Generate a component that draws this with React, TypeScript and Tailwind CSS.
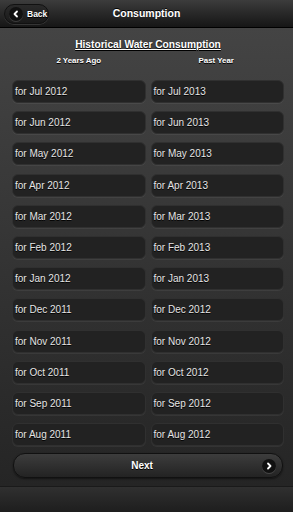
import React from "react";

const left = ["Jul 2012","Jun 2012","May 2012","Apr 2012","Mar 2012","Feb 2012","Jan 2012","Dec 2011","Nov 2011","Oct 2011","Sep 2011","Aug 2011"];
const right = ["Jul 2013","Jun 2013","May 2013","Apr 2013","Mar 2013","Feb 2013","Jan 2013","Dec 2012","Nov 2012","Oct 2012","Sep 2012","Aug 2012"];

function Chevron({ dir }: { dir: "left" | "right" }) {
  return (
    <span className="flex h-[14px] w-[14px] items-center justify-center rounded-full bg-[#111] shadow-[0_1px_0_rgba(255,255,255,0.15)]">
      <svg width="8" height="8" viewBox="0 0 8 8">
        {dir === "left" ? (
          <path d="M5 1.5 L2.5 4 L5 6.5" stroke="#fff" strokeWidth="1.8" fill="none" strokeLinecap="round" strokeLinejoin="round" />
        ) : (
          <path d="M3 1.5 L5.5 4 L3 6.5" stroke="#fff" strokeWidth="1.8" fill="none" strokeLinecap="round" strokeLinejoin="round" />
        )}
      </svg>
    </span>
  );
}

export default function App() {
  const rows = left.map((l, i) => [l, right[i]]);
  return (
    <div className="flex h-[512px] w-[293px] flex-col overflow-hidden font-['Liberation_Sans',Arial,sans-serif]">
      <header className="relative flex h-[28px] shrink-0 items-center justify-center border-b border-[#000] bg-gradient-to-b from-[#3c3c3c] to-[#161616]">
        <button className="absolute left-[4px] top-[4px] flex h-[20px] w-[45px] items-center gap-[4px] rounded-full border border-[#111] bg-gradient-to-b from-[#2a2a2a] to-[#1a1a1a] pl-[4px] shadow-[0_1px_0_rgba(255,255,255,0.12)]">
          <Chevron dir="left" />
          <span className="text-[8.5px] font-bold text-white [text-shadow:0_1px_0_#000]">Back</span>
        </button>
        <h1 className="text-[10.5px] font-bold text-white [text-shadow:0_-1px_0_#000]">Consumption</h1>
      </header>
      <main className="flex h-[458px] shrink-0 flex-col bg-gradient-to-b from-[#444444] to-[#252525] pl-[12px] pr-[9px]">
        <h2 className="mt-[10px] text-center text-[10.2px] font-bold leading-[14px] text-white underline underline-offset-[1px] [text-shadow:0_1px_1px_#000]">
          Historical Water Consumption
        </h2>
        <div className="mt-[4px] grid grid-cols-2 gap-x-[5px] text-[7.9px] font-bold leading-[10px] text-white [text-shadow:0_1px_0_#000]">
          <div className="text-center">2 Years Ago</div>
          <div className="text-center pr-[2px]">Past Year</div>
        </div>
        <div className="mt-[14px] grid grid-cols-2 gap-x-[5px] gap-y-[8.2px]">
          {rows.map(([l, r]) => (
            <React.Fragment key={l}>
              {[l, r].map((t) => (
                <div
                  key={t}
                  className="flex h-[23px] items-center rounded-[6px] border border-[#303030] bg-[#222] pl-[2px] text-[10px] text-[#e6e6e6] shadow-[0_1px_0_rgba(255,255,255,0.06)] [text-shadow:0_1px_0_#000]"
                >
                  for {t}
                </div>
              ))}
            </React.Fragment>
          ))}
        </div>
        <button className="relative mt-[7px] ml-[1px] mr-[1px] flex h-[25px] items-center justify-center rounded-[12px] border border-[#111] bg-gradient-to-b from-[#3d3d3d] to-[#232323] pr-[12px] shadow-[0_1px_2px_rgba(0,0,0,0.5)]">
          <span className="text-[10px] font-bold text-white [text-shadow:0_1px_0_#000]">Next</span>
          <span className="absolute right-[6px] top-[5px]">
            <Chevron dir="right" />
          </span>
        </button>
      </main>
      <footer className="h-[26px] shrink-0 border-t border-[#1a1a1a] bg-gradient-to-b from-[#303030] to-[#1e1e1e]" />
    </div>
  );
}
